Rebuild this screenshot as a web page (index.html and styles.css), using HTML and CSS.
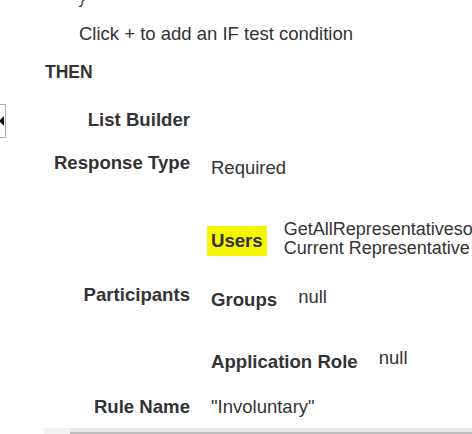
FILE: index.html
```html
<!DOCTYPE html>
<html lang="en">

<head>
  <meta charset="UTF-8">
  <meta name="viewport" content="width=device-width, initial-scale=1.0">
  <title>Rule</title>
  <link rel="stylesheet" href="styles.css">
</head>

<body>
  <div class="handle"><span class="arrow"></span></div>

  <div class="brace"><span>}</span></div>
  <p class="hint">Click + to add an IF test condition</p>
  <h3 class="then">THEN</h3>

  <div class="rows">
    <div class="row">
      <div class="label">List Builder</div>
      <div class="value"></div>
    </div>

    <div class="row row-type">
      <div class="label">Response Type</div>
      <div class="value value-low">Required</div>
    </div>

    <div class="row row-part">
      <div class="label label-part">Participants</div>
      <div class="subs">
        <div class="sub sub-users">
          <span class="sub-label mark">Users</span>
          <div class="sub-value multi">
            <div>GetAllRepresentativesofOrganization</div>
            <div>Current Representative</div>
          </div>
        </div>
        <div class="sub sub-groups">
          <span class="sub-label">Groups</span>
          <span class="sub-value">null</span>
        </div>
        <div class="sub sub-role">
          <span class="sub-label">Application Role</span>
          <span class="sub-value">null</span>
        </div>
      </div>
    </div>

    <div class="row row-name">
      <div class="label">Rule Name</div>
      <div class="value">"Involuntary"</div>
    </div>
  </div>

  <div class="scroll"><div class="thumb"></div></div>
</body>

</html>
```

FILE: styles.css
```css
:root {
  --txt-color: #333;
  --mark-color: #f6f600;
}

* {
  margin: 0;
  padding: 0;
  box-sizing: border-box;
}

body {
  width: 472px;
  height: 434px;
  overflow: hidden;
  position: relative;
  font-family: "Liberation Sans", Arial, Helvetica, sans-serif;
  font-size: 18.5px;
  color: var(--txt-color);
  background: #fff;
  white-space: nowrap;
}

/* collapse handle on the left edge */
.handle {
  position: absolute;
  left: 0;
  top: 104px;
  width: 6px;
  height: 34px;
  border: 1px solid #9fb0c4;
  border-left: none;
  background: #fff;
}

.handle .arrow {
  position: absolute;
  left: -1px;
  top: 11px;
  border-top: 5px solid transparent;
  border-bottom: 5px solid transparent;
  border-right: 5px solid #111;
}

.brace {
  height: 8px;
  overflow: hidden;
  padding-left: 80px;
}

.brace span {
  display: block;
  margin-top: -12px;
  line-height: 22px;
  font-size: 17px;
  font-style: italic;
  color: #444;
}

.hint {
  margin-top: 14px;
  padding-left: 79px;
  line-height: 24px;
}

.then {
  margin-top: 14px;
  padding-left: 45px;
  line-height: 24px;
  font-size: 17.5px;
  font-weight: bold;
}

.rows {
  margin-top: 24px;
}

.row {
  display: flex;
  gap: 21px;
  line-height: 24px;
}

.label {
  width: 190px;
  flex: none;
  text-align: right;
  font-size: 18.6px;
  font-weight: bold;
}

.row-type {
  margin-top: 19px;
}

.value-low {
  padding-top: 5px;
}

.row-part {
  margin-top: 40px;
  align-items: center;
}

.label-part {
  padding-bottom: 4px;
}

.subs {
  display: flex;
  flex-direction: column;
}

.sub {
  display: flex;
  align-items: flex-start;
  gap: 21px;
}

.sub-label {
  font-size: 18.6px;
  font-weight: bold;
  padding-top: 3px;
}

.mark {
  margin-top: 6px;
  margin-left: -4px;
  padding: 0 4px;
  height: 30px;
  line-height: 30px;
  background: var(--mark-color);
}

.sub-users .sub-value {
  margin-left: -4px;
}

.multi {
  font-size: 18px;
  line-height: 18.5px;
}

.sub-groups {
  margin-top: 28px;
}

.sub-role {
  margin-top: 34px;
}

.sub-role .sub-label {
  padding-top: 4px;
}

.row-name {
  margin-top: 21px;
}

.scroll {
  position: absolute;
  left: 44px;
  right: 0;
  bottom: 0;
  height: 6px;
  background: #f3f3f3;
}

.thumb {
  margin-left: 26px;
  height: 6px;
  background: #e8e8e8;
  border-bottom: 2px solid #bdbdbd;
}
```
